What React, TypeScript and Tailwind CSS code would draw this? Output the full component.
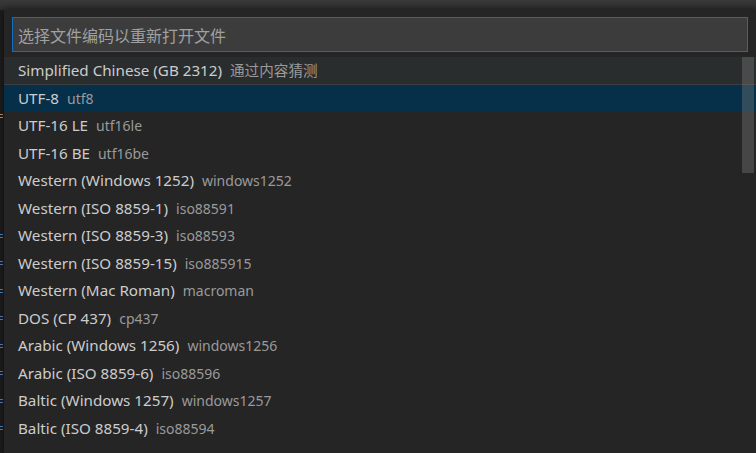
import React from 'react';

const items = [
  { label: 'Simplified Chinese (GB 2312)', desc: '通过内容猜测', state: 'hover' },
  { label: 'UTF-8', desc: 'utf8', state: 'selected' },
  { label: 'UTF-16 LE', desc: 'utf16le' },
  { label: 'UTF-16 BE', desc: 'utf16be' },
  { label: 'Western (Windows 1252)', desc: 'windows1252' },
  { label: 'Western (ISO 8859-1)', desc: 'iso88591' },
  { label: 'Western (ISO 8859-3)', desc: 'iso88593' },
  { label: 'Western (ISO 8859-15)', desc: 'iso885915' },
  { label: 'Western (Mac Roman)', desc: 'macroman' },
  { label: 'DOS (CP 437)', desc: 'cp437' },
  { label: 'Arabic (Windows 1256)', desc: 'windows1256' },
  { label: 'Arabic (ISO 8859-6)', desc: 'iso88596' },
  { label: 'Baltic (Windows 1257)', desc: 'windows1257' },
  { label: 'Baltic (ISO 8859-4)', desc: 'iso88594' },
];

// editor text peeking out to the left of the widget, one entry per list row
const gutter = ['', '', 'orange', '', '', '', 'blue', 'blue', 'blue', 'blue', 'blue', 'blue', 'blue', 'blue'];

function GutterMark({ kind }: { kind: string }) {
  if (!kind) return <div className="h-[27.5px]" />;
  const color = kind === 'orange' ? 'bg-[#ce9178]' : 'bg-[#4f8fd6]';
  return (
    <div className={`h-[27.5px] flex flex-col gap-[2px] ${kind === 'orange' ? 'justify-start pt-[2px]' : 'justify-center'}`}>
      <div className={`w-[3px] h-[1px] ${color}`} />
      <div className={`w-[3px] h-[1px] ${color}`} />
    </div>
  );
}

export default function App() {
  return (
    <div
      className="w-[756px] h-[453px] overflow-hidden bg-[#1e1e1e] flex flex-col"
      style={{ fontFamily: '"Noto Sans", "Open Sans", "Noto Sans CJK SC", sans-serif' }}
    >
      <div className="h-[10px] shrink-0 bg-gradient-to-b from-[#3a3a3a] to-[#2f2f2f]" />

      <div className="flex flex-1 min-h-0">
        <div className="w-[4px] shrink-0 flex flex-col pt-[47px]">
          {gutter.map((g, i) => (
            <GutterMark key={i} kind={g} />
          ))}
        </div>

        <div className="flex-1 bg-[#252526] shadow-[0_0_8px_rgba(0,0,0,0.6)]">
          <div className="px-[8px] pt-[7px] pb-[5px]">
            <div className="h-[35px] bg-[#3c3c3c] border border-[#0e70c0] flex items-center px-[5px]">
              <span
                className="text-[16px] text-[#a0a0a0] leading-none"
                style={{ fontFamily: '"Noto Sans CJK SC", "Noto Sans", sans-serif' }}
              >
                选择文件编码以重新打开文件
              </span>
            </div>
          </div>

          <div className="relative">
            {items.map((it, i) => (
              <div
                key={i}
                className={`h-[27.5px] flex items-center gap-[8px] pl-[14px] whitespace-nowrap ${
                  it.state === 'selected'
                    ? 'bg-[#062f4a]'
                    : it.state === 'hover'
                    ? 'bg-[#2a2d2e] border-b border-[#3c3f41]'
                    : ''
                }`}
              >
                <span className="text-[15.2px] text-[#cccccc]">{it.label}</span>
                {it.desc === '通过内容猜测' ? (
                  <span
                    className="text-[14.6px] text-[#9a9a9a]"
                    style={{ fontFamily: '"Noto Sans CJK SC", sans-serif' }}
                  >
                    {it.desc}
                  </span>
                ) : (
                  <span className="text-[14px] text-[#9a9a9a]">{it.desc}</span>
                )}
              </div>
            ))}

            <div className="absolute top-0 right-[2px] w-[12px] h-[116px] bg-[rgba(121,121,121,0.4)]" />
          </div>
        </div>
      </div>
    </div>
  );
}
